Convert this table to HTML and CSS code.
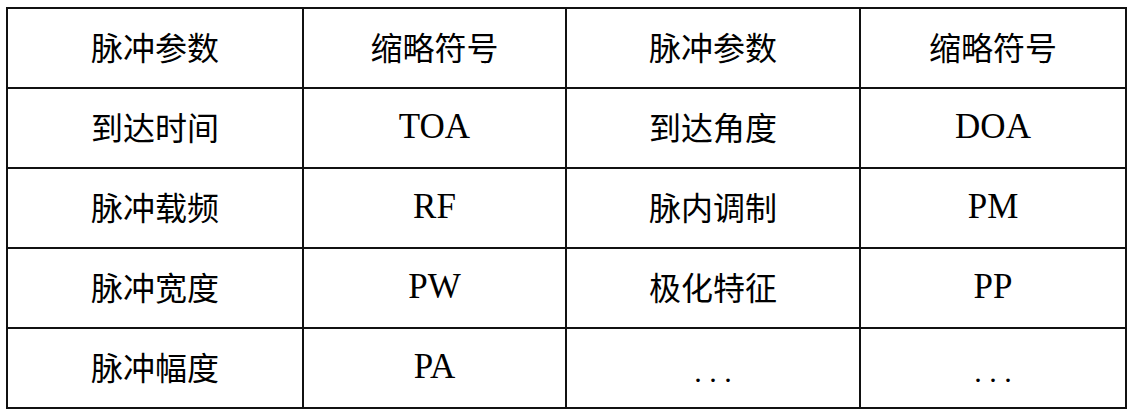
FILE: index.html
```html
<!DOCTYPE html>
<html lang="zh">
<head>
<meta charset="utf-8">
<link rel="stylesheet" href="styles.css">
</head>
<body>
<table class="params">
  <colgroup>
    <col class="c1"><col class="c2"><col class="c3"><col class="c4">
  </colgroup>
  <tr><td>脉冲参数</td><td>缩略符号</td><td>脉冲参数</td><td>缩略符号</td></tr>
  <tr><td>到达时间</td><td class="lat">TOA</td><td>到达角度</td><td class="lat">DOA</td></tr>
  <tr><td>脉冲载频</td><td class="lat">RF</td><td>脉内调制</td><td class="lat">PM</td></tr>
  <tr><td>脉冲宽度</td><td class="lat">PW</td><td>极化特征</td><td class="lat">PP</td></tr>
  <tr><td>脉冲幅度</td><td class="lat">PA</td><td class="lat dots">. . .</td><td class="lat dots">. . .</td></tr>
</table>
</body>
</html>
```
FILE: styles.css
```css
html, body {
  margin: 0;
  padding: 0;
  background: #fff;
}
body {
  padding: 7px 0 0 6px;
}
.params {
  border-collapse: collapse;
  table-layout: fixed;
  width: 1119px;
  font-family: "Noto Sans CJK SC", "Liberation Serif", sans-serif;
  color: #000;
}
.c1 { width: 296px; }
.c2 { width: 263px; }
.c3 { width: 294px; }
.c4 { width: 266px; }
.params td {
  border: 2px solid #111;
  height: 74px;
  padding: 0 0 4px 0;
  text-align: center;
  vertical-align: middle;
  font-size: 32px;
  line-height: 1;
}
.params td.lat {
  font-family: "Liberation Serif", "Times New Roman", serif;
  font-size: 35px;
}
.params td.dots {
  font-size: 30px;
  height: 71px;
  padding-top: 7px;
  padding-bottom: 0;
}
```
